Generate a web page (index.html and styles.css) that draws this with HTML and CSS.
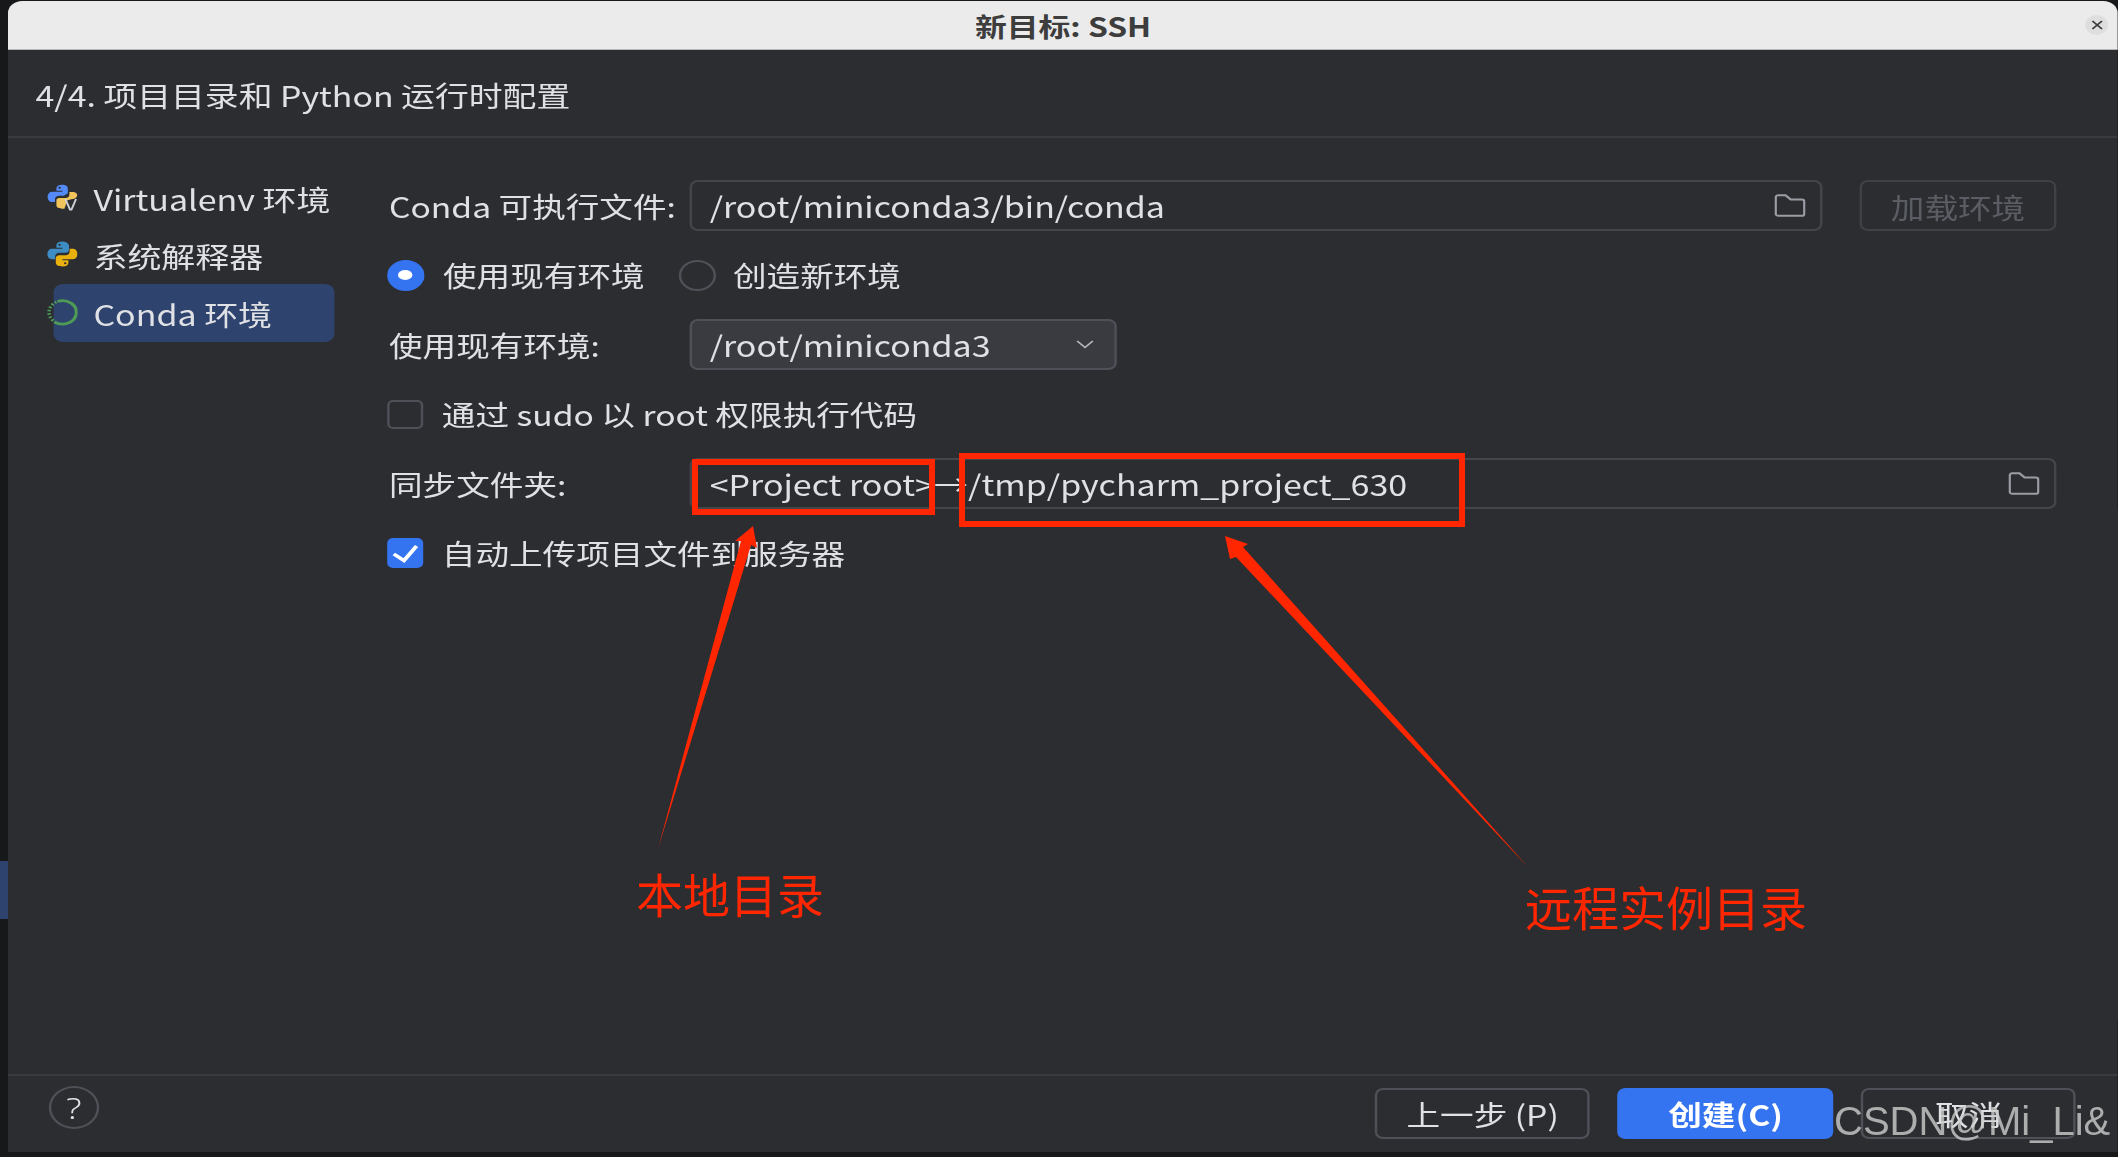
FILE: index.html
```html
<!DOCTYPE html>
<html lang="zh-CN">
<head>
    <meta charset="UTF-8">
    <title>新目标: SSH</title>
    <link rel="stylesheet" href="styles.css">
</head>
<body>
    <div class="dialog">
        <div class="titlebar">
            <span class="title">新目标: SSH</span>
            <span class="close">
                <svg width="10" height="10" viewBox="0 0 10 10"><path d="M1 1l8 8M9 1l-8 8" stroke="#3c3c3c" stroke-width="1.6" fill="none"/></svg>
            </span>
        </div>
        <div class="header">4/4. 项目目录和 Python 运行时配置</div>
        <div class="content">
            <div class="sidebar">
                <div class="side-item">
                    <svg class="side-icon" viewBox="0 0 16 16">
                        <path d="M7.8.6C6 .6 5 1.5 5 2.8v1.4h3v.6H3C1.5 4.800.6 6 .6 7.800s.9 3.200 2.400 3.200h1.300V9.200c0-1.200.9-2 2-2h2.400l2-1.500V2.800C10.700 1.500 9.600.6 7.800.6z" fill="#548af7"/>
                        <circle cx="6.600" cy="2.500" r=".6" fill="#2c2d31"/>
                        <path d="M11.500 5v1.600c0 1.200-.9 2-2 2H6.500c-1 0-1.500.7-1.500 1.500v3c0 1 1.200 1.900 2.800 1.900h1.200l1.500-5 2.500-.8h.5c1 0 1.900-1.400 1.900-2.500C15.400 6 14.600 5 13.300 5z" fill="#f2c55c"/>
                        <path d="M9.500 9.200l2.300 6.400h.7l2.300-6.400" fill="none" stroke="#ced0d6" stroke-width="1"/>
                    </svg>
                    <span>Virtualenv 环境</span>
                </div>
                <div class="side-item">
                    <svg class="side-icon" viewBox="0 0 16 16">
                        <path d="M7.900.5C6 .5 5 1.400 5 2.700v1.500h3v.6H3C1.500 4.800.5 6 .5 8s1 3.200 2.500 3.200h1.400V9.400c0-1.200.9-2.100 2-2.100h3.200c1 0 1.700-.8 1.700-1.800V2.700C10.800 1.400 9.700.5 7.900.5z" fill="#3d8cc4"/>
                        <circle cx="6.600" cy="2.500" r=".6" fill="#2c2d31"/>
                        <path d="M8.100 15.500c1.900 0 2.900-.9 2.900-2.200v-1.500H8v-.6h5c1.500 0 2.500-1.200 2.500-3.200s-1-3.200-2.500-3.200h-1.400v1.800c0 1.200-.9 2.100-2 2.100H6.400c-1 0-1.700.8-1.700 1.800v2.800c0 1.300 1.100 2.200 3.400 2.200z" fill="#e8b10e"/>
                        <circle cx="9.400" cy="13.500" r=".6" fill="#2c2d31"/>
                    </svg>
                    <span>系统解释器</span>
                </div>
                <div class="side-item selected">
                    <svg class="side-icon" viewBox="0 0 16 16">
                        <path d="M5.500 1.700A7 7 0 1 1 4 14" fill="none" stroke="#4f9b55" stroke-width="1.700"/>
                        <path d="M5 2A7 7 0 0 0 4.400 14" fill="none" stroke="#4f9b55" stroke-width="1.700" stroke-dasharray="1 1"/>
                    </svg>
                    <span>Conda 环境</span>
                </div>
            </div>
            <div class="form">
                <div class="row row-field">
                    <label class="row-label">Conda 可执行文件:</label>
                    <div class="field grow">
                        <span>/root/miniconda3/bin/conda</span>
                        <svg class="folder" viewBox="1 1 24 21"><path d="M2 4a2 2 0 0 1 2-2h5.500l4 4H22a2 2 0 0 1 2 2v11a2 2 0 0 1-2 2H4a2 2 0 0 1-2-2z" fill="none" stroke="#9a9da4" stroke-width="1.800"/></svg>
                    </div>
                    <div class="btn load-btn">加载环境</div>
                </div>
                <div class="row row-check">
                    <span class="radio on"></span>
                    <span class="check-text">使用现有环境</span>
                    <span class="radio"></span>
                    <span class="check-text">创造新环境</span>
                </div>
                <div class="row row-field">
                    <label class="row-label">使用现有环境:</label>
                    <div class="field select">
                        <span>/root/miniconda3</span>
                        <svg class="chevron" viewBox="0 0 15 9"><path d="M1 1l6.500 6.500L14 1" fill="none" stroke="#b4b8bf" stroke-width="1.500"/></svg>
                    </div>
                </div>
                <div class="row row-check">
                    <span class="checkbox"></span>
                    <span class="check-text">通过 sudo 以 root 权限执行代码</span>
                </div>
                <div class="row row-field">
                    <label class="row-label">同步文件夹:</label>
                    <div class="field grow">
                        <span>&lt;Project root&gt;→/tmp/pycharm_project_630</span>
                        <svg class="folder" viewBox="1 1 24 21"><path d="M2 4a2 2 0 0 1 2-2h5.500l4 4H22a2 2 0 0 1 2 2v11a2 2 0 0 1-2 2H4a2 2 0 0 1-2-2z" fill="none" stroke="#9a9da4" stroke-width="1.800"/></svg>
                    </div>
                </div>
                <div class="row row-check">
                    <span class="checkbox on">
                        <svg viewBox="0 0 30 30"><path d="M5.500 16l8.500 6.500L24.500 8" fill="none" stroke="#fff" stroke-width="3.400"/></svg>
                    </span>
                    <span class="check-text">自动上传项目文件到服务器</span>
                </div>
            </div>
        </div>
        <div class="footer">
            <span class="help">?</span>
            <div class="footer-buttons">
                <div class="btn">上一步 (P)</div>
                <div class="btn primary">创建(C)</div>
                <div class="btn">取消</div>
            </div>
        </div>
    </div>

    <svg class="marks" width="2118" height="1157" viewBox="0 0 2118 1157">
        <rect x="695" y="462" width="237" height="50" fill="none" stroke="#ff2600" stroke-width="6"/>
        <rect x="962" y="456" width="500" height="68" fill="none" stroke="#ff2600" stroke-width="6"/>
        <polygon points="753,526 757,548 751,545 658,849 741,541 735,541" fill="#ff2600"/>
        <polygon points="1225,536 1248,544 1243,547 1528,867 1236,557 1230,559" fill="#ff2600"/>
    </svg>
    <div class="note note-local">本地目录</div>
    <div class="note note-remote">远程实例目录</div>
    <div class="watermark">CSDN@Mi_Li&amp;</div>
</body>
</html>
```

FILE: styles.css
```css
html, body {
    margin: 0;
    height: 100%;
}
body {
    position: relative;
    width: 2118px;
    height: 1157px;
    overflow: hidden;
    padding: 1px 0 0 8px;
    box-sizing: border-box;
    background: linear-gradient(#2e436e, #2e436e) 0 861px / 8px 58px no-repeat, #17181a;
    font-family: "Noto Sans CJK SC", "Noto Sans", sans-serif;
    font-size: 28px;
    color: #dfe1e5;
}
/* the source picture is stretched sideways, so is the dialog */
.dialog {
    width: 1758.33px;
    height: 1151px;
    display: flex;
    flex-direction: column;
    background: #2c2d31;
    border-radius: 12px 12px 0 0;
    overflow: hidden;
    transform: scaleX(1.2);
    transform-origin: 0 0;
}
.titlebar {
    height: 48px;
    flex: none;
    display: flex;
    align-items: center;
    justify-content: center;
    position: relative;
    background: #ebebeb;
    border-bottom: 1px solid #b5b5b5;
}
.title {
    font-size: 26.500px;
    font-weight: 700;
    color: #3d3d3d;
}
.close {
    position: absolute;
    right: 8px;
    top: 14px;
    width: 19px;
    height: 20px;
    border-radius: 50%;
    background: #dedede;
    display: flex;
    align-items: center;
    justify-content: center;
}
.header {
    height: 88px;
    flex: none;
    box-sizing: border-box;
    padding: 2px 0 0 23px;
    display: flex;
    align-items: center;
    border-bottom: 2px solid #393b40;
    font-size: 28.200px;
}
.content {
    flex: 1;
    display: flex;
}
.sidebar {
    width: 317.5px;
    flex: none;
    box-sizing: border-box;
    padding: 31.5px 0 0 37.5px;
    font-size: 28.300px;
}
.side-item {
    width: 234px;
    height: 58px;
    margin-top: -0.5px;
    display: flex;
    align-items: center;
    gap: 13px;
    border-radius: 8px;
}
.side-item.selected {
    background: #2e436e;
}
.side-icon {
    width: 26.7px;
    height: 30px;
    margin: 0 0 3px -6px;
    flex: none;
}
.form {
    flex: 1;
    display: flex;
    flex-direction: column;
    gap: 21px;
    padding: 42px 51.3px 0 0;
}
.row {
    display: flex;
    align-items: center;
}
.row-field {
    height: 51px;
}
.row-check {
    height: 46px;
    margin-left: -2px;
}
.row-label {
    width: 250.8px;
    flex: none;
}
.field {
    height: 51px;
    box-sizing: border-box;
    padding: 0 12px 0 14.5px;
    display: flex;
    align-items: center;
    justify-content: space-between;
    border: 2px solid #44464c;
    border-radius: 7px;
    font-size: 28.300px;
}
.grow {
    flex: 1;
}
.select {
    width: 356px;
    background: #393b40;
    border-color: #4e5157;
}
.folder {
    width: 26px;
    height: 23px;
}
.chevron {
    width: 15px;
    height: 9px;
    margin-right: 5px;
}
.btn {
    width: 179px;
    height: 51px;
    box-sizing: border-box;
    display: flex;
    align-items: center;
    justify-content: center;
    border: 2px solid #4e5157;
    border-radius: 7px;
}
.load-btn {
    width: 164px;
    margin-left: 31.3px;
    padding-top: 2px;
    color: #5a5d63;
    border-color: #3f4146;
}
.primary {
    width: 180px;
    background: #3574f0;
    border-color: #3574f0;
    color: #fff;
    font-weight: 700;
}
.radio {
    width: 31px;
    height: 31px;
    flex: none;
    box-sizing: border-box;
    border: 2px solid #4e5157;
    border-radius: 50%;
    display: flex;
    align-items: center;
    justify-content: center;
}
.radio.on {
    background: #3574f0;
    border-color: #3574f0;
}
.radio.on::after {
    content: "";
    width: 12px;
    height: 10px;
    border-radius: 50%;
    background: #fff;
}
.checkbox {
    width: 30px;
    height: 29px;
    flex: none;
    box-sizing: border-box;
    border: 2px solid #4e5157;
    border-radius: 5px;
}
.checkbox.on {
    height: 30px;
    border: 0;
    background: #3574f0;
}
.checkbox svg {
    display: block;
}
.check-text {
    margin-left: 16px;
}
.radio + .check-text + .radio {
    margin-left: 28.6px;
}
.radio + .check-text + .radio + .check-text {
    margin-left: 14px;
}
.footer {
    height: 78px;
    flex: none;
    box-sizing: border-box;
    padding: 0 35px 0 34px;
    display: flex;
    align-items: center;
    justify-content: space-between;
    border-top: 2px solid #393b40;
}
.help {
    width: 42px;
    height: 43px;
    box-sizing: border-box;
    margin-top: -14px;
    border: 2px solid #4e5157;
    border-radius: 50%;
    display: flex;
    align-items: center;
    justify-content: center;
    font-family: "Noto Sans", sans-serif;
    font-weight: 300;
    font-size: 30px;
}
.footer-buttons {
    display: flex;
    gap: 23px;
    margin-top: -1px;
}
.marks {
    position: absolute;
    left: 0;
    top: 0;
}
.note {
    position: absolute;
    color: #ff2600;
    font-size: 47px;
    line-height: 47px;
}
.note-local {
    left: 636px;
    top: 869px;
}
.note-remote {
    left: 1525px;
    top: 882px;
}
.watermark {
    position: absolute;
    left: 1834px;
    top: 1098px;
    font-family: "Liberation Sans", sans-serif;
    font-size: 40px;
    line-height: 46px;
    color: rgba(205, 205, 205, 0.8);
    white-space: nowrap;
}
```
